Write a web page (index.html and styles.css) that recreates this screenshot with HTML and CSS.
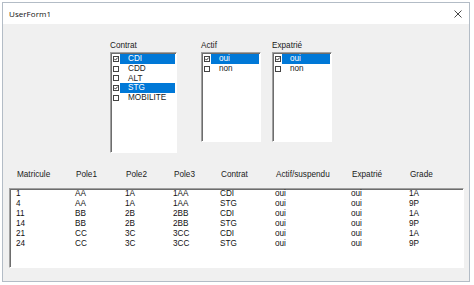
FILE: index.html
```html
<!DOCTYPE html>
<html>
<head>
<meta charset="utf-8">
<link rel="stylesheet" href="styles.css">
</head>
<body>
<div class="window">
  <div class="titlebar">
    <span class="title">UserForm1</span>
    <svg class="close" width="8" height="8" viewBox="0 0 8 8"><path d="M0.5 0.5L7.5 7.5M7.5 0.5L0.5 7.5" stroke="#333" stroke-width="0.9" fill="none"/></svg>
  </div>
  <div class="formbody">
    <div class="filters">
      <div class="group g-contrat">
        <div class="glabel">Contrat</div>
        <div class="lbox lb-contrat">
          <div class="opt"><svg class="cb" width="6" height="6" viewBox="0 0 6 6"><rect x="0.5" y="0.5" width="5" height="5" fill="#fff" stroke="#444"/><path d="M1.3 2.8L2.5 4.1L4.7 1.6" stroke="#222" stroke-width="0.9" fill="none"/></svg><span class="otext sel">CDI</span></div>
          <div class="opt"><svg class="cb" width="6" height="6" viewBox="0 0 6 6"><rect x="0.5" y="0.5" width="5" height="5" fill="#fff" stroke="#444"/></svg><span class="otext">CDD</span></div>
          <div class="opt"><svg class="cb" width="6" height="6" viewBox="0 0 6 6"><rect x="0.5" y="0.5" width="5" height="5" fill="#fff" stroke="#444"/></svg><span class="otext">ALT</span></div>
          <div class="opt"><svg class="cb" width="6" height="6" viewBox="0 0 6 6"><rect x="0.5" y="0.5" width="5" height="5" fill="#fff" stroke="#444"/><path d="M1.3 2.8L2.5 4.1L4.7 1.6" stroke="#222" stroke-width="0.9" fill="none"/></svg><span class="otext sel">STG</span></div>
          <div class="opt"><svg class="cb" width="6" height="6" viewBox="0 0 6 6"><rect x="0.5" y="0.5" width="5" height="5" fill="#fff" stroke="#444"/></svg><span class="otext">MOBILITE</span></div>
        </div>
      </div>
      <div class="group g-actif">
        <div class="glabel">Actif</div>
        <div class="lbox lb-small">
          <div class="opt"><svg class="cb" width="6" height="6" viewBox="0 0 6 6"><rect x="0.5" y="0.5" width="5" height="5" fill="#fff" stroke="#444"/><path d="M1.3 2.8L2.5 4.1L4.7 1.6" stroke="#222" stroke-width="0.9" fill="none"/></svg><span class="otext sel">oui</span></div>
          <div class="opt"><svg class="cb" width="6" height="6" viewBox="0 0 6 6"><rect x="0.5" y="0.5" width="5" height="5" fill="#fff" stroke="#444"/></svg><span class="otext">non</span></div>
        </div>
      </div>
      <div class="group g-expat">
        <div class="glabel">Expatrié</div>
        <div class="lbox lb-small">
          <div class="opt"><svg class="cb" width="6" height="6" viewBox="0 0 6 6"><rect x="0.5" y="0.5" width="5" height="5" fill="#fff" stroke="#444"/><path d="M1.3 2.8L2.5 4.1L4.7 1.6" stroke="#222" stroke-width="0.9" fill="none"/></svg><span class="otext sel">oui</span></div>
          <div class="opt"><svg class="cb" width="6" height="6" viewBox="0 0 6 6"><rect x="0.5" y="0.5" width="5" height="5" fill="#fff" stroke="#444"/></svg><span class="otext">non</span></div>
        </div>
      </div>
    </div>
    <div class="cols header">
      <span>Matricule</span><span>Pole1</span><span>Pole2</span><span>Pole3</span><span>Contrat</span><span>Actif/suspendu</span><span>Expatrié</span><span>Grade</span>
    </div>
    <div class="datalist">
      <div class="cols row"><span>1</span><span>AA</span><span>1A</span><span>1AA</span><span>CDI</span><span>oui</span><span>oui</span><span>1A</span></div>
      <div class="cols row"><span>4</span><span>AA</span><span>1A</span><span>1AA</span><span>STG</span><span>oui</span><span>oui</span><span>9P</span></div>
      <div class="cols row"><span>11</span><span>BB</span><span>2B</span><span>2BB</span><span>CDI</span><span>oui</span><span>oui</span><span>1A</span></div>
      <div class="cols row"><span>14</span><span>BB</span><span>2B</span><span>2BB</span><span>STG</span><span>oui</span><span>oui</span><span>9P</span></div>
      <div class="cols row"><span>21</span><span>CC</span><span>3C</span><span>3CC</span><span>CDI</span><span>oui</span><span>oui</span><span>1A</span></div>
      <div class="cols row"><span>24</span><span>CC</span><span>3C</span><span>3CC</span><span>STG</span><span>oui</span><span>oui</span><span>9P</span></div>
    </div>
  </div>
</div>
</body>
</html>
```
FILE: styles.css
```css
html, body {
  margin: 0;
  padding: 0;
  background: #ffffff;
}
body {
  width: 474px;
  height: 285px;
  overflow: hidden;
  font-family: "Liberation Sans", Arial, sans-serif;
  color: #1a1a1a;
}
.window {
  margin: 2px 0 0 2px;
  width: 468px;
  height: 280px;
  box-sizing: border-box;
  border: 1px solid #b3bcc6;
  display: flex;
  flex-direction: column;
}
.titlebar {
  height: 21px;
  flex: none;
  background: #ffffff;
  display: flex;
  align-items: center;
  justify-content: space-between;
  padding: 0 7px 0 6px;
}
.title {
  font-family: "Open Sans", "Noto Sans", sans-serif;
  font-size: 8px;
  color: #111;
  letter-spacing: 0.05px;
}
.close {
  display: block;
}
.formbody {
  flex: 1;
  background: #f0f0f0;
  display: flex;
  flex-direction: column;
}
.filters {
  display: flex;
  align-items: flex-start;
  padding: 17px 0 0 107px;
  height: 112px;
}
.glabel {
  font-size: 8.2px;
  line-height: 10px;
  height: 10px;
  margin-bottom: 1px;
}
.g-actif {
  margin-left: 24px;
}
.g-expat {
  margin-left: 11px;
}
.lbox {
  box-sizing: border-box;
  background: #ffffff;
  border-top: 1px solid #a0a0a0;
  border-left: 1px solid #a0a0a0;
  border-right: 1px solid #ffffff;
  border-bottom: 1px solid #ffffff;
  box-shadow: inset 1px 1px 0 #6d6d6d;
  padding-top: 1px;
  padding-right: 1px;
}
.lb-contrat {
  width: 67px;
  height: 101px;
}
.lb-small {
  width: 60px;
  height: 90px;
}
.opt {
  display: flex;
  align-items: center;
  height: 9.75px;
  font-size: 8.2px;
}
.cb {
  flex: none;
  display: block;
  margin-left: 2px;
  margin-right: 1px;
}
.otext {
  flex: 1;
  height: 9.3px;
  line-height: 9.5px;
  padding-left: 8px;
  white-space: nowrap;
}
.otext.sel {
  background: #0078d7;
  color: #ffffff;
}
.cols {
  display: grid;
  grid-template-columns: 59px 50px 48px 47px 55px 76px 58px 1fr;
  font-size: 8.2px;
  line-height: 10px;
  white-space: nowrap;
}
.header {
  margin-top: 17px;
  height: 10px;
  margin-bottom: 8px;
  padding-left: 14px;
}
.datalist {
  margin-left: 6px;
  width: 455px;
  height: 80px;
  box-sizing: border-box;
  background: #ffffff;
  border-top: 1px solid #a0a0a0;
  border-left: 1px solid #a0a0a0;
  border-right: 1px solid #ffffff;
  border-bottom: 1px solid #ffffff;
  box-shadow: inset 1px 1px 0 #6d6d6d;
}
.row {
  height: 10px;
  padding-left: 6px;
  color: #111;
}
```
